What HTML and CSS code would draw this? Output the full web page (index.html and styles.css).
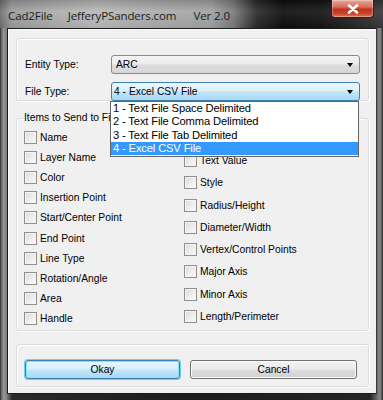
FILE: index.html
```html
<!DOCTYPE html>
<html>
<head>
<meta charset="utf-8">
<link rel="stylesheet" href="styles.css">
</head>
<body>
<div class="window">
  <div class="titlebar">
    <span class="title">Cad2File</span>
    <span class="title t2">JefferyPSanders.com</span>
    <span class="title t3">Ver 2.0</span>
    <div class="close"><svg width="14" height="10" viewBox="0 0 14 10"><path d="M3 1.5 L11 8.5 M11 1.5 L3 8.5" stroke="#fff" stroke-width="2.6" stroke-linecap="round"/></svg></div>
  </div>
  <div class="client">
    <div class="group g1">
      <div class="row">
        <span class="lbl">Entity Type:</span>
        <div class="combo"><span>ARC</span><i class="arrow"></i></div>
      </div>
      <div class="row">
        <span class="lbl">File Type:</span>
        <div class="combo focus"><span>4 - Excel CSV File</span><i class="arrow"></i>
          <ul class="list">
            <li>1 - Text File Space Delimited</li>
            <li>2 - Text File Comma Delimited</li>
            <li>3 - Text File Tab Delimited</li>
            <li class="sel">4 - Excel CSV File</li>
          </ul>
        </div>
      </div>
    </div>
    <fieldset class="group g2">
      <legend>Items to Send to File</legend>
      <div class="cols">
        <div class="col left">
          <label class="cb"><i></i>Name</label>
          <label class="cb"><i></i>Layer Name</label>
          <label class="cb"><i></i>Color</label>
          <label class="cb"><i></i>Insertion Point</label>
          <label class="cb"><i></i>Start/Center Point</label>
          <label class="cb"><i></i>End Point</label>
          <label class="cb"><i></i>Line Type</label>
          <label class="cb"><i></i>Rotation/Angle</label>
          <label class="cb"><i></i>Area</label>
          <label class="cb"><i></i>Handle</label>
        </div>
        <div class="col right">
          <label class="cb"><i></i></label>
          <label class="cb"><i></i>Text Value</label>
          <label class="cb"><i></i>Style</label>
          <label class="cb"><i></i>Radius/Height</label>
          <label class="cb"><i></i>Diameter/Width</label>
          <label class="cb"><i></i>Vertex/Control Points</label>
          <label class="cb"><i></i>Major Axis</label>
          <label class="cb"><i></i>Minor Axis</label>
          <label class="cb"><i></i>Length/Perimeter</label>
        </div>
      </div>
    </fieldset>
    <div class="group g3">
      <button class="btn ok">Okay</button>
      <button class="btn cancel">Cancel</button>
    </div>
  </div>
</div>
</body>
</html>
```
FILE: styles.css
```css
html, body { margin: 0; padding: 0; }
body { background: #1e1e1e; width: 383px; height: 400px; overflow: hidden; }
.window {
  width: 383px; height: 400px; box-sizing: border-box;
  display: flex; flex-direction: column;
  padding: 0 6px 6px 7px;
  background: linear-gradient(to right, #2c2c2c 0, #7a7a7a 2px, #959595 4px, #7c7c7c 7px, #2a2a2a 12px, #1c1c1c 50%, #262626 370px, #6a6a6a 377px, #8a8a8a 380px, #2a2a2a 383px);
  font-family: "Liberation Sans", Arial, sans-serif;
  font-size: 10.3px;
  color: #000;
}
.titlebar {
  height: 28px; margin: 0 -6px 0 -7px; padding-left: 8px;
  display: flex; align-items: center;
  background:
    linear-gradient(to bottom, rgba(0,0,0,.18) 0, rgba(255,255,255,.08) 40%, rgba(0,0,0,.05) 100%),
    linear-gradient(to right, #6e6e6e 0, #9c9c9c 3%, #a9a9a9 12%, #b9b9b9 25%, #aaaaaa 42%, #a2a2a2 55%, #7a7a7a 61%, #2a2a2a 67%, #0f0f0f 74%, #151515 84%, #3a3a3a 100%);
}
.title {
  font-family: "Open Sans", "Noto Sans", sans-serif;
  font-size: 11.5px; color: #1c1c1c; letter-spacing: -0.1px;
  margin-top: 2px;
}
.t2 { margin-left: 15px; }
.t3 { margin-left: 17px; }
.close {
  margin-left: auto; margin-right: 9px; align-self: flex-start;
  width: 43px; height: 18px; box-sizing: border-box;
  border: 1px solid #3a1a14; border-top: none;
  border-radius: 0 0 4px 4px;
  background: linear-gradient(to bottom, #e9a898 0, #d8705c 40%, #c0341c 55%, #c8432b 80%, #e07a5e 100%);
  display: flex; align-items: center; justify-content: center;
  box-shadow: inset 0 0 0 1px rgba(255,255,255,.3);
}
.client {
  flex: 1; background: #f0f0f0;
  border: 1px solid #1a1a1a; border-right-color: #3a3a3a;
  padding: 9px 7px 6px 8px;
  display: flex; flex-direction: column;
  box-shadow: inset 1px 1px 0 #fff;
}
.group {
  border: 1px solid #dcdcdc; border-radius: 3px;
  box-shadow: inset 1px 1px 0 #fff, 1px 1px 0 #fff;
  margin: 0;
}
.g1 { padding: 16px 8px 0 8px; height: 63px; box-sizing: border-box; display: flex; flex-direction: column; gap: 8px; }
.row { display: flex; align-items: center; height: 19px; }
.lbl { width: 86px; }
.combo {
  position: relative; flex: 1; height: 19px; box-sizing: border-box;
  border: 1px solid #8a8a8a; border-radius: 3px;
  background: linear-gradient(to bottom, #f4f4f4 0, #ececec 45%, #dcdcdc 55%, #d6d6d6 100%);
  display: flex; align-items: center; padding-left: 4px;
}
.combo.focus {
  border-color: #3c7fb1; padding-left: 2px;
  background: linear-gradient(to bottom, #ecf6fd 0, #dcf0fb 45%, #bfe4f8 55%, #a9d9f4 100%);
}
.arrow {
  position: absolute; right: 6px; top: 7px;
  width: 0; height: 0;
  border-left: 3.5px solid transparent; border-right: 3.5px solid transparent;
  border-top: 4px solid #000;
}
.list {
  position: absolute; left: -2px; right: 0; top: 18px;
  margin: 0; padding: 0 0 1px 0; list-style: none;
  background: #fff; border: 1px solid #646464;
  z-index: 5;
}
.list li { height: 13.3px; line-height: 13.3px; padding-left: 2px; font-size: 11.2px; letter-spacing: -0.15px; }
.list li.sel { background: #3399ff; color: #fff; }
.g2 {
  margin-top: 11px; padding: 3px 8px 0 6px; height: 219px; box-sizing: border-box;
  min-width: 0;
}
.g2 legend { padding: 0 1px; margin-left: 0; line-height: 12px; }
.cols { display: flex; }
.col { display: flex; flex-direction: column; }
.left { width: 160px; padding-left: 1px; }
.cb { display: flex; align-items: center; height: 20.2px; }
.right .cb { height: 22.3px; }
.cb i {
  width: 13px; height: 13px; box-sizing: border-box; flex: none;
  border: 1px solid #8f8f8f; margin-right: 3px;
  background: linear-gradient(135deg, #dadada 0, #ececec 50%, #fafafa 100%);
  box-shadow: inset 0 0 0 1px #f4f4f4;
}
.g3 {
  margin-top: 13px; height: 43px; box-sizing: border-box;
  padding: 15px 10px 0 8px; display: flex; gap: 10px; align-items: flex-start;
}
.btn {
  height: 19px; box-sizing: border-box; padding: 0;
  font-family: "Liberation Sans", Arial, sans-serif; font-size: 10.3px; color: #000;
  border-radius: 3px;
}
.ok {
  width: 155px;
  border: 1px solid #3c7fb1;
  background: linear-gradient(to bottom, #e6f5fd 0, #d9f0fc 45%, #bee6fd 55%, #a7d9f5 100%);
  box-shadow: 0 0 0 1px #6cd0f0, inset 0 0 0 1px #8ee0f8;
}
.cancel {
  width: 167px;
  border: 1px solid #707070;
  background: linear-gradient(to bottom, #f2f2f2 0, #ebebeb 45%, #dddddd 55%, #cfcfcf 100%);
  box-shadow: inset 0 0 0 1px #fbfbfb;
}
```
